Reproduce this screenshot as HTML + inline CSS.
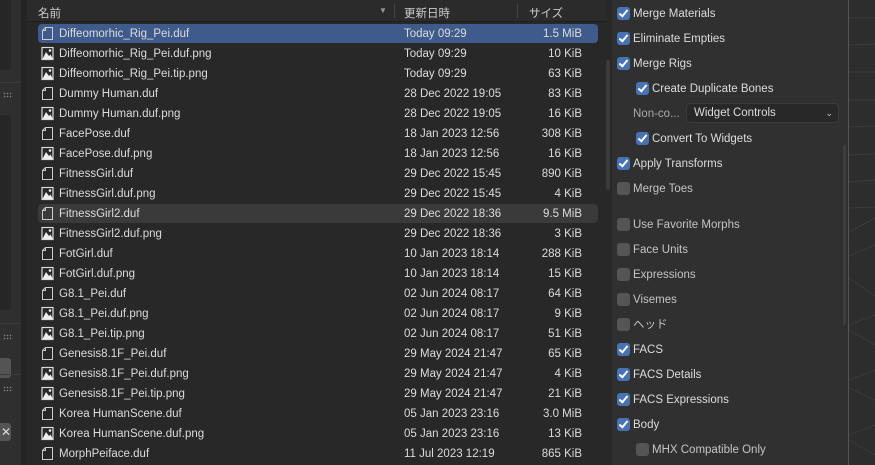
<!DOCTYPE html>
<html><head><meta charset="utf-8"><style>
*{margin:0;padding:0;box-sizing:border-box}
body{width:875px;height:465px;overflow:hidden;background:#282828;font-family:"Liberation Sans","Noto Sans CJK JP",sans-serif;font-size:11.5px;color:#dcdcdc;position:relative}
.a{position:absolute}
.row{position:absolute;left:38px;width:560px;height:19px;line-height:20px;border-radius:4px}
.row .n{position:absolute;left:21px}
.row .d{position:absolute;left:366px}
.row .s{position:absolute;right:16px}
.row svg{position:absolute;left:3px;top:2px}
.sel{background:#3f5b8c}
.hov{background:#3a3a3a}
.cb{position:absolute;width:13px;height:13px;border-radius:3px;background:#555}
.cb.on{background:#4772b3}
.cb.on::after{content:"";position:absolute;left:4px;top:1px;width:3px;height:7px;border:solid #fff;border-width:0 2px 2px 0;transform:rotate(40deg)}
.lbl{position:absolute;line-height:14px;color:#dcdcdc}
.dots{position:absolute;width:10px;height:6px;background-image:radial-gradient(#888 0.6px,transparent 0.9px);background-size:3px 3px}
</style></head><body>
<div class="a" style="left:0;top:0;width:21px;height:465px;background:#2f2f2f"></div>
<div class="a" style="left:0;top:0;width:11px;height:70px;background:#262626;border-radius:0 0 3px 0"></div>
<div class="a" style="left:0;top:82px;width:20px;height:1px;background:#3c3c3c"></div>
<div class="dots" style="left:3px;top:92px"></div>
<div class="a" style="left:0;top:115px;width:11px;height:195px;background:#262626;border-radius:0 3px 3px 0"></div>
<div class="a" style="left:0;top:323px;width:20px;height:1px;background:#3c3c3c"></div>
<div class="dots" style="left:3px;top:334px"></div>
<div class="a" style="left:0;top:358px;width:11px;height:20px;background:#545454;border-radius:0 3px 3px 0"></div>
<div class="a" style="left:0;top:374px;width:20px;height:1px;background:#3c3c3c"></div>
<div class="dots" style="left:3px;top:386px"></div>
<div class="a" style="left:0;top:423px;width:11px;height:18px;background:#545454;border-radius:0 3px 3px 0;color:#ddd;font-size:12px;line-height:18px;text-align:right">✕</div>
<div class="a" style="left:21px;top:0;width:6px;height:465px;background:#242424"></div>
<div class="a" style="left:27px;top:0;width:580px;height:22px;background:#2b2b2b;border-bottom:1px solid #1f1f1f"></div>
<div class="a" style="left:38px;top:5px;color:#ccc">名前</div>
<div class="a" style="left:379px;top:6px;color:#999;font-size:8px">▼</div>
<div class="a" style="left:394px;top:4px;width:1px;height:14px;background:#444"></div>
<div class="a" style="left:404px;top:5px;color:#ccc">更新日時</div>
<div class="a" style="left:517px;top:4px;width:1px;height:14px;background:#444"></div>
<div class="a" style="left:529px;top:5px;color:#ccc">サイズ</div>
<div class="a" style="left:606px;top:60px;width:4px;height:130px;background:#3a3a3a;border-radius:2px"></div>
<div id="list"></div>
<div class="a" style="left:612px;top:0;width:236px;height:465px;background:#303030"></div>
<div class="a" style="left:843px;top:145px;width:3px;height:180px;background:#3d3d3d;border-radius:2px"></div>
<div class="a" style="left:848px;top:0;width:1px;height:465px;background:#555"></div>
<div class="a" style="left:849px;top:0;width:26px;height:465px;background:#2d2d2d"></div>
<svg class="a" style="left:849px;top:0" width="26" height="465"><g stroke="#3a3a3a" stroke-width="1" fill="none">
<line x1="0" y1="18" x2="26" y2="18"/><line x1="0" y1="45" x2="26" y2="44"/><line x1="0" y1="72" x2="26" y2="72"/><line x1="0" y1="100" x2="26" y2="100"/><line x1="0" y1="127" x2="26" y2="126"/><line x1="0" y1="155" x2="26" y2="154"/><line x1="0" y1="182" x2="26" y2="180"/><line x1="0" y1="208" x2="26" y2="207"/>
<line x1="0" y1="232" x2="26" y2="218"/><line x1="0" y1="256" x2="26" y2="245"/><line x1="0" y1="278" x2="26" y2="296"/><line x1="0" y1="325" x2="26" y2="315"/><line x1="0" y1="330" x2="26" y2="345"/><line x1="0" y1="380" x2="26" y2="370"/><line x1="0" y1="388" x2="26" y2="400"/><line x1="0" y1="435" x2="26" y2="425"/><line x1="0" y1="440" x2="26" y2="455"/></g></svg>
<div id="opts"></div>
<div class="a" style="left:633px;top:107px;color:#aaa;line-height:14px">Non-co...</div>
<div class="a" style="left:686px;top:103px;width:153px;height:20px;background:#282828;border:1px solid #3a3a3a;border-radius:4px;line-height:19px;padding-left:7px">Widget Controls<span style="position:absolute;right:5px;top:0;font-size:9px;color:#ccc">⌄</span></div>
<script>
const files=[["Diffeomorhic_Rig_Pei.duf","Today 09:29","1.5 MiB"],["Diffeomorhic_Rig_Pei.duf.png","Today 09:29","10 KiB"],["Diffeomorhic_Rig_Pei.tip.png","Today 09:29","63 KiB"],["Dummy Human.duf","28 Dec 2022 19:05","83 KiB"],["Dummy Human.duf.png","28 Dec 2022 19:05","16 KiB"],["FacePose.duf","18 Jan 2023 12:56","308 KiB"],["FacePose.duf.png","18 Jan 2023 12:56","16 KiB"],["FitnessGirl.duf","29 Dec 2022 15:45","890 KiB"],["FitnessGirl.duf.png","29 Dec 2022 15:45","4 KiB"],["FitnessGirl2.duf","29 Dec 2022 18:36","9.5 MiB"],["FitnessGirl2.duf.png","29 Dec 2022 18:36","3 KiB"],["FotGirl.duf","10 Jan 2023 18:14","288 KiB"],["FotGirl.duf.png","10 Jan 2023 18:14","15 KiB"],["G8.1_Pei.duf","02 Jun 2024 08:17","64 KiB"],["G8.1_Pei.duf.png","02 Jun 2024 08:17","9 KiB"],["G8.1_Pei.tip.png","02 Jun 2024 08:17","51 KiB"],["Genesis8.1F_Pei.duf","29 May 2024 21:47","65 KiB"],["Genesis8.1F_Pei.duf.png","29 May 2024 21:47","4 KiB"],["Genesis8.1F_Pei.tip.png","29 May 2024 21:47","21 KiB"],["Korea HumanScene.duf","05 Jan 2023 23:16","3.0 MiB"],["Korea HumanScene.duf.png","05 Jan 2023 23:16","13 KiB"],["MorphPeiface.duf","11 Jul 2023 12:19","865 KiB"]];
const doc='<svg width="13" height="15"><path d="M4.5 1.5H11.5V13.5H1.5V4.5Z M4.5 1.5V4.5H1.5" fill="none" stroke="#ccc" stroke-width="1"/></svg>';
const img='<svg width="13" height="15"><rect x="1" y="1.5" width="11" height="12" fill="none" stroke="#ddd" stroke-width="1.2"/><path d="M1.5 13 L5 6 L8 10 L9.5 8.5 L12 13Z" fill="#eee"/><circle cx="9" cy="4.5" r="1.3" fill="#eee"/></svg>';
let h='';files.forEach((f,i)=>{let c=i==0?' sel':(i==9?' hov':'');h+=`<div class="row${c}" style="top:${24+i*20}px">${f[0].endsWith('.png')?img:doc}<span class="n">${f[0]}</span><span class="d">${f[1]}</span><span class="s">${f[2]}</span></div>`});
document.getElementById('list').innerHTML=h;
const o=[["Merge Materials",13,1,0],["Eliminate Empties",38,1,0],["Merge Rigs",63,1,0],["Create Duplicate Bones",88,1,1],["Convert To Widgets",138,1,1],["Apply Transforms",163,1,0],["Merge Toes",188,0,0],["Use Favorite Morphs",224,0,0],["Face Units",249,0,0],["Expressions",274,0,0],["Visemes",299,0,0],["ヘッド",324,0,0],["FACS",349,1,0],["FACS Details",374,1,0],["FACS Expressions",399,1,0],["Body",424,1,0],["MHX Compatible Only",449,0,1]];
let g='';o.forEach(x=>{let cx=x[3]?636:617;g+=`<div class="cb${x[2]?' on':''}" style="left:${cx}px;top:${x[1]-6}px"></div><div class="lbl" style="left:${cx+16}px;top:${x[1]-6}px;${x[2]?'':'color:#c4c4c4'}">${x[0]}</div>`});
document.getElementById('opts').innerHTML=g;
</script>
</body></html>
